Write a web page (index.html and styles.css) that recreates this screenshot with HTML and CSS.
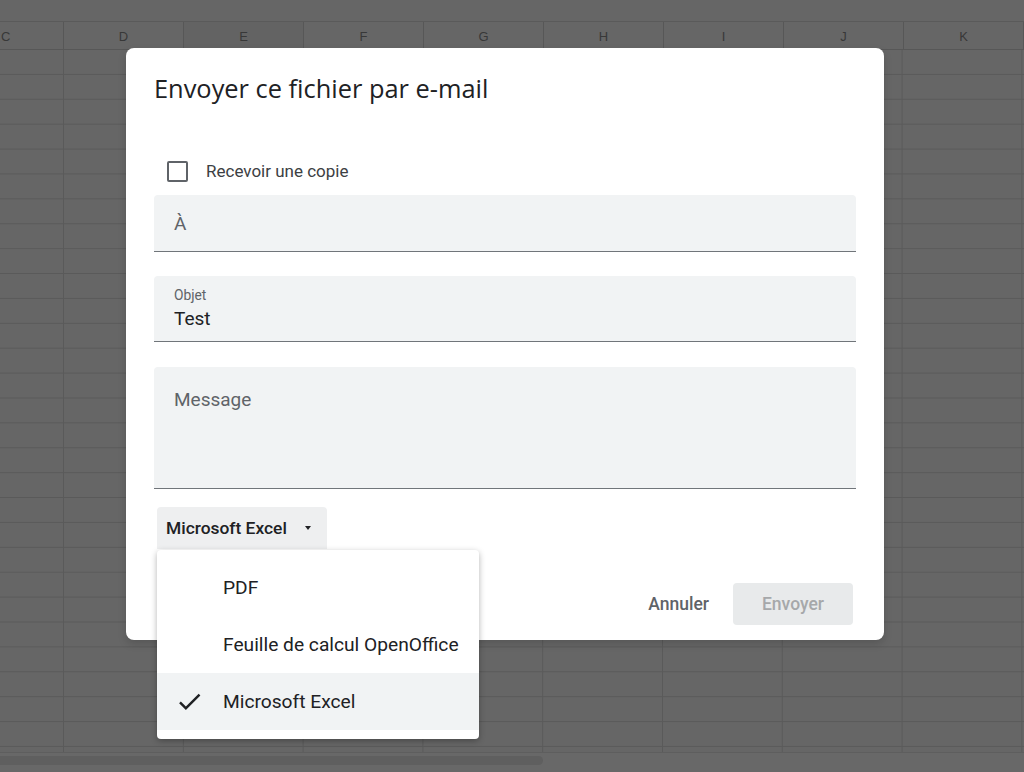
FILE: index.html
```html
<!DOCTYPE html>
<html lang="fr">
<head>
<meta charset="utf-8">
<title>Envoyer ce fichier par e-mail</title>
<link rel="stylesheet" href="styles.css">
</head>
<body>
<div class="screen">
  <div class="sheet">
    <div class="topbar"></div>
    <div class="colheads">
      <div class="colhead first">C</div>
      <div class="colhead">D</div>
      <div class="colhead sel">E</div>
      <div class="colhead">F</div>
      <div class="colhead">G</div>
      <div class="colhead">H</div>
      <div class="colhead">I</div>
      <div class="colhead">J</div>
      <div class="colhead">K</div>
    </div>
    <div class="cells"></div>
    <div class="hscroll"><div class="thumb"></div></div>
  </div>

  <div class="dialog">
    <h1 class="title">Envoyer ce fichier par e-mail</h1>
    <label class="check-row">
      <span class="checkbox"></span>
      <span class="check-label">Recevoir une copie</span>
    </label>
    <div class="field field-to">
      <span class="placeholder">À</span>
    </div>
    <div class="field field-subject">
      <span class="small-label">Objet</span>
      <span class="value">Test</span>
    </div>
    <div class="field field-message">
      <span class="placeholder">Message</span>
    </div>
    <div class="format-row">
      <div class="format-btn">
        <span>Microsoft Excel</span>
        <span class="arrow"></span>
      </div>
    </div>
    <div class="actions">
      <button class="btn-text">Annuler</button>
      <button class="btn-send">Envoyer</button>
    </div>
  </div>

  <div class="menu">
    <div class="menu-item"><span class="mark"></span><span>PDF</span></div>
    <div class="menu-item"><span class="mark"></span><span>Feuille de calcul OpenOffice</span></div>
    <div class="menu-item selected">
      <span class="mark">
        <svg viewBox="0 0 24 24" width="29" height="29"><path d="M9 16.17L4.83 12l-1.42 1.41L9 19 21 7l-1.41-1.41z" fill="#202124"/></svg>
      </span>
      <span>Microsoft Excel</span>
    </div>
  </div>
</div>
</body>
</html>
```

FILE: styles.css
```css
* { box-sizing: border-box; }
html, body { margin: 0; padding: 0; }
body {
  background: #666;
  font-family: Roboto, "Noto Sans", sans-serif;
  overflow: hidden;
}
.screen {
  position: relative;
  width: 1024px;
  height: 772px;
  overflow: hidden;
}

/* spreadsheet background */
.sheet {
  display: flex;
  flex-direction: column;
  width: 1024px;
  height: 772px;
  background: #666;
}
.topbar {
  height: 22px;
  border-bottom: 1px solid #5a5a5a;
}
.colheads {
  display: flex;
  height: 28px;
  border-bottom: 1px solid #575757;
}
.colhead {
  flex: 0 0 120px;
  border-right: 1px solid #575757;
  display: flex;
  align-items: center;
  justify-content: center;
  color: #383838;
  font-family: "Liberation Sans", Arial, sans-serif;
  font-size: 13px;
  padding-top: 1px;
}
.colhead.first {
  flex: 0 0 64px;
  justify-content: flex-start;
  padding-left: 1px;
}
.colhead.sel { background: #636363; }
.cells {
  flex: 1;
  background-color: #666;
  background-image:
    linear-gradient(to right, #5a5a5a 1px, transparent 1px),
    linear-gradient(to bottom, transparent 23.9px, #5a5a5a 23.9px);
  background-size: 119.8px 100%, 100% 24.9px;
  background-position: 63px 0, 0 0;
}
.hscroll {
  height: 20px;
  border-top: 1px solid #5e5e5e;
  background: #686868;
  padding-top: 3px;
}
.thumb {
  width: 543px;
  height: 9px;
  border-radius: 0 5px 5px 0;
  background: #5f5f5f;
}

/* dialog */
.dialog {
  position: absolute;
  left: 126px;
  top: 48px;
  width: 758px;
  height: 592px;
  background: #fff;
  border-radius: 8px;
  padding: 20px 28px 15px 28px;
  display: flex;
  flex-direction: column;
  box-shadow: 0 4px 8px rgba(0,0,0,0.15);
}
.title {
  margin: 0;
  font-family: "Open Sans", Roboto, sans-serif;
  font-weight: 400;
  font-size: 25.4px;
  line-height: 40px;
  color: #202124;
  letter-spacing: 0;
}
.check-row {
  display: flex;
  align-items: center;
  margin-top: 51px;
  padding-left: 13px;
  height: 24px;
}
.checkbox {
  width: 21px;
  height: 21px;
  border: 2px solid #5f6368;
  border-radius: 2px;
}
.check-label {
  margin-left: 18px;
  font-size: 17px;
  color: #3c4043;
}
.field {
  background: #f1f3f4;
  border-radius: 4px 4px 0 0;
  border-bottom: 1px solid #70757a;
  padding: 0 20px;
  display: flex;
  flex-direction: column;
}
.field-to {
  margin-top: 12px;
  height: 57px;
  justify-content: center;
  padding-top: 2px;
}
.field-subject {
  margin-top: 24px;
  height: 66px;
  padding-top: 11px;
}
.field-message {
  margin-top: 25px;
  height: 122px;
  padding-top: 21px;
}
.placeholder {
  font-size: 19px;
  color: #5f6368;
  line-height: 24px;
}
.small-label {
  font-size: 13.8px;
  color: #5f6368;
  line-height: 17px;
}
.value {
  font-size: 19px;
  color: #202124;
  line-height: 24px;
  margin-top: 3px;
}
.format-row {
  display: flex;
  margin-top: 18px;
  padding-left: 3px;
}
.format-btn {
  display: flex;
  align-items: center;
  height: 42px;
  width: 170px;
  padding: 0 9px;
  background: #eeeff0;
  border-radius: 4px 4px 0 0;
  font-size: 17.4px;
  font-weight: 500;
  color: #202124;
}
.format-btn .arrow {
  margin-left: auto;
  margin-right: 7px;
  width: 0;
  height: 0;
  border-left: 3.5px solid transparent;
  border-right: 3.5px solid transparent;
  border-top: 4px solid #202124;
}
.actions {
  margin-top: auto;
  display: flex;
  justify-content: flex-end;
  padding-right: 3px;
}
.actions button {
  font-family: inherit;
  font-size: 17.5px;
  font-weight: 500;
  height: 42px;
  border: none;
  border-radius: 4px;
  background: transparent;
  cursor: pointer;
}
.btn-text {
  color: #5f6368;
  padding: 0 24px;
}
.btn-send {
  width: 120px;
  background: #e8eaeb !important;
  color: #a6a8aa;
}

/* dropdown menu */
.menu {
  position: absolute;
  left: 157px;
  top: 550px;
  width: 322px;
  padding: 9px 0;
  background: #fff;
  border-radius: 4px;
  box-shadow: 0 2px 6px rgba(0,0,0,0.3);
}
.menu-item {
  display: flex;
  align-items: center;
  height: 57px;
  font-size: 19.2px;
  color: #202124;
}
.menu-item.selected { background: #f1f3f4; }
.mark {
  flex: 0 0 66px;
  display: flex;
  align-items: center;
  padding-left: 18px;
}
.mark svg { display: block; }
```
